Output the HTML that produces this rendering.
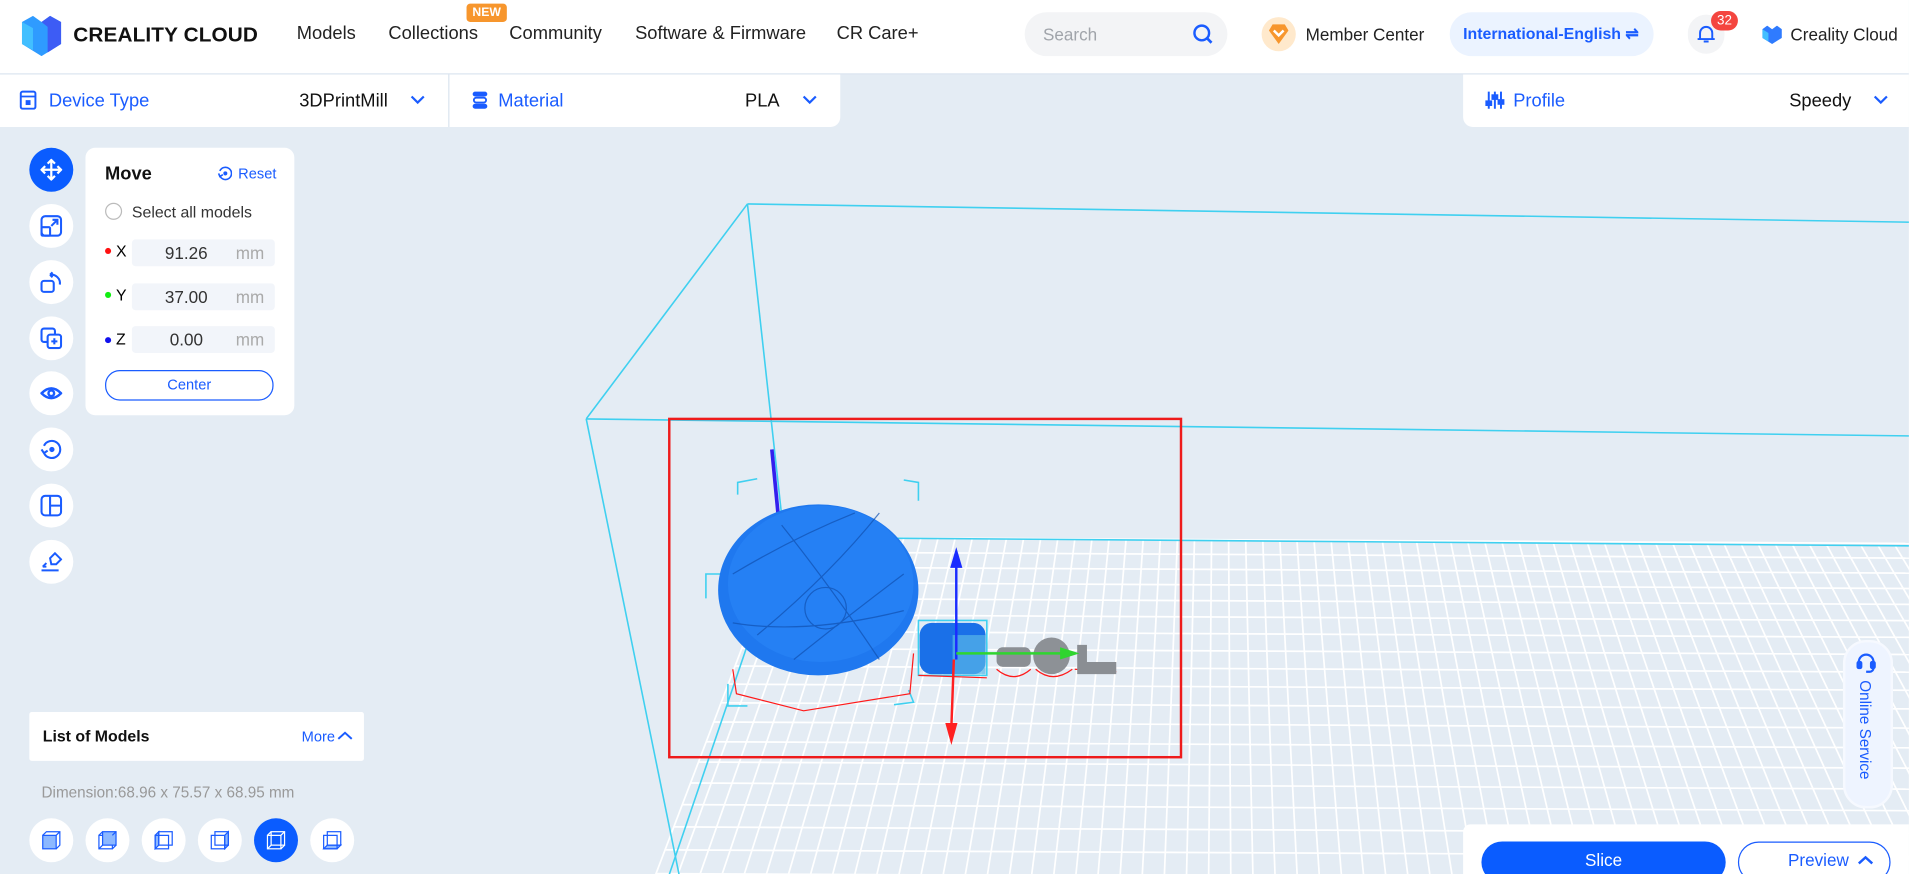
<!DOCTYPE html>
<html><head><meta charset="utf-8">
<style>
html,body{margin:0;padding:0;width:1915px;height:874px;overflow:hidden;background:#e4ecf4;font-family:"Liberation Sans",Arial,sans-serif;}
#w{position:absolute;left:0;top:0;width:1568px;height:716px;transform:scale(1.22130);transform-origin:0 0;background:#e4ecf4;overflow:hidden;}
.a{position:absolute;}
.hdr{left:0;top:0;width:1563px;height:60px;background:#fff;border-bottom:1px solid #dbe4ef;}
.nav{font-size:15px;color:#222;top:19px;}
.bar{background:#fff;top:61px;height:43px;}
.blue{color:#1a5cff;}
.tb{width:36px;height:36px;border-radius:50%;background:#fff;left:24px;}
.tb svg{position:absolute;left:9px;top:9px;}
.lbl{font-size:14px;}
.inp{left:108px;width:117px;height:22px;background:#f2f5fa;border-radius:3px;}
.inp span{position:absolute;font-size:14px;}
.cb{width:36px;height:36px;border-radius:50%;background:#fff;top:670px;}
.cb svg{position:absolute;left:10px;top:10px;}
</style></head><body><div id="w">

<svg class="a" style="left:0;top:0" width="1568" height="716" viewBox="0 0 1568 716">
<g id="grid" stroke="#fff" stroke-width="1.4"></g>
<g stroke="#3fd0f0" stroke-width="1.3" fill="none">
<line x1="612" y1="167" x2="1568" y2="182"/>
<line x1="612" y1="167" x2="480" y2="343"/>
<line x1="480" y1="343" x2="1568" y2="357"/>
<line x1="612" y1="167" x2="642" y2="440"/>
<line x1="480" y1="343" x2="556" y2="716"/>
<line x1="642" y1="440" x2="1568" y2="447"/>
<line x1="642" y1="440" x2="548" y2="716"/>
<path d="M604 405 L604 395 L620 392 M740 393 L752 395 L752 410 M584 470 L578 470 L578 490 M578 470 L598 470 M596 560 L596 578 L612 578 M744 565 L748 575 L732 577 M752 508 L808 508 L808 553 L752 553 Z"/>
</g>
<g stroke="#ff1a1a" stroke-width="1" fill="none">
<path d="M600 548 L603 568 L658 582 L745 568 L748 535"/>
<path d="M752 553 L808 555 M816 548 q14 12 28 0 M848 548 q14 12 30 0 M880 548 L914 550"/>
</g>
<line x1="632" y1="368" x2="637" y2="420" stroke="#3320ee" stroke-width="3"/>
<ellipse cx="670" cy="483" rx="82" ry="70" fill="#1f78ef"/>
<ellipse cx="672" cy="478" rx="76" ry="64" fill="#2a86f6" opacity=".6"/>
<g stroke="#1050b0" stroke-width="1" fill="none" opacity=".7">
<path d="M600 470 Q650 440 700 420 M620 520 Q680 470 720 420 M650 540 Q700 500 740 470 M640 430 Q680 480 720 540 M600 510 Q660 520 740 500"/>
<circle cx="676" cy="498" r="17"/>
</g>
<rect x="753" y="510" width="54" height="42" rx="10" fill="#1a70e8"/>
<rect x="780" y="520" width="27" height="32" fill="#58b7e8" opacity=".7"/>
<rect x="816" y="530" width="28" height="16" rx="5" fill="#8b8f94"/>
<circle cx="861" cy="537" r="15" fill="#8d9196"/>
<path d="M882 528 h8 v14 h24 v10 h-32 z" fill="#8a8e93"/>
<line x1="783" y1="462" x2="783" y2="540" stroke="#1a2cff" stroke-width="2"/>
<path d="M783 448 L778 465 L788 465 Z" fill="#1a2cff"/>
<line x1="781" y1="540" x2="779" y2="595" stroke="#ff2020" stroke-width="2"/>
<path d="M779 610 L774 592 L784 592 Z" fill="#ff2020"/>
<line x1="783" y1="535" x2="870" y2="535" stroke="#2fd52f" stroke-width="2"/>
<path d="M884 535 L868 530 L868 540 Z" fill="#2fd52f"/>
<rect x="548" y="343" width="419" height="277" fill="none" stroke="#ee1b1b" stroke-width="2"/>
</svg>

<div class="a hdr"></div>
<svg class="a" style="left:17px;top:12px" width="34" height="34" viewBox="0 0 34 34">
<path d="M1 6 L10 1 L17 6 L24 1 L33 6 L33 24 L17 34 L1 24 Z" fill="#2f9bff"/>
<path d="M17 6 L24 1 L33 6 L33 24 L22 31 L22 10 Z" fill="#3d5cf5"/>
<path d="M1 6 L10 11 L10 29 L1 24 Z" fill="#42bfff"/>
</svg>
<div class="a" style="left:60px;top:19px;font-size:17px;font-weight:bold;letter-spacing:0.1px;color:#111;">CREALITY CLOUD</div>
<div class="a nav" style="left:243px">Models</div>
<div class="a nav" style="left:318px">Collections</div>
<div class="a" style="left:382px;top:3px;width:33px;height:15px;background:#f7962d;border-radius:3px;color:#fff;font-size:10px;font-weight:bold;text-align:center;line-height:15px;">NEW</div>
<div class="a nav" style="left:417px">Community</div>
<div class="a nav" style="left:520px">Software &amp; Firmware</div>
<div class="a nav" style="left:685px">CR Care+</div>
<div class="a" style="left:839px;top:10px;width:166px;height:36px;border-radius:18px;background:#f3f4f6;"></div>
<div class="a" style="left:854px;top:20px;font-size:14px;color:#a0a4aa;">Search</div>
<svg class="a" style="left:976px;top:19px" width="18" height="18" viewBox="0 0 18 18"><circle cx="8" cy="8" r="6" fill="none" stroke="#1a5cff" stroke-width="2"/><line x1="12" y1="12" x2="16" y2="16" stroke="#1a5cff" stroke-width="2.2"/></svg>
<div class="a" style="left:1033px;top:14px;width:28px;height:28px;border-radius:50%;background:#ffe9cc;"></div>
<svg class="a" style="left:1039px;top:19px" width="16" height="18" viewBox="0 0 16 18"><path d="M3 1 H13 L16 6 L8 17 L0 6 Z" fill="#f7962d"/><path d="M4 6 L8 10 L12 6" fill="none" stroke="#fff" stroke-width="2"/></svg>
<div class="a" style="left:1069px;top:20px;font-size:14px;color:#222;">Member Center</div>
<div class="a" style="left:1187px;top:10px;width:167px;height:36px;border-radius:18px;background:#ebf3ff;"></div>
<div class="a" style="left:1198px;top:20px;font-size:13px;font-weight:bold;color:#1a5cff;">International-English ⇌</div>
<div class="a" style="left:1382px;top:12px;width:30px;height:32px;border-radius:15px;background:#f3f4f6;"></div>
<svg class="a" style="left:1389px;top:19px" width="16" height="18" viewBox="0 0 16 18"><path d="M3 13 V8 a5 5 0 0 1 10 0 V13 H15 H1 Z M6 15 h4" fill="none" stroke="#1a5cff" stroke-width="1.6"/></svg>
<div class="a" style="left:1401px;top:9px;width:22px;height:16px;border-radius:8px;background:#f4453f;color:#fff;font-size:11px;text-align:center;line-height:16px;">32</div>
<svg class="a" style="left:1443px;top:21px" width="16" height="15" viewBox="0 0 16 15"><path d="M0 3 L4 0 L8 3 L12 0 L16 3 L16 10 L8 15 L0 10 Z" fill="#2f7bff"/><path d="M0 3 L5 6 L5 13 L0 10Z" fill="#42bfff"/></svg>
<div class="a" style="left:1466px;top:20px;font-size:14px;color:#222;">Creality Cloud</div>
<div class="a" style="left:1563px;top:0;width:5px;height:716px;background:#fff;"></div>

<div class="a bar" style="left:0;width:688px;border-radius:0 0 8px 0;"></div>
<div class="a" style="left:367px;top:61px;width:1px;height:43px;background:#dbe4ef;"></div>
<svg class="a" style="left:16px;top:74px" width="14" height="16" viewBox="0 0 14 16"><rect x="1" y="1" width="12" height="14" rx="1.5" fill="none" stroke="#1a5cff" stroke-width="1.6"/><line x1="1" y1="5" x2="13" y2="5" stroke="#1a5cff" stroke-width="1.4"/><rect x="5" y="8" width="4" height="4" fill="#1a5cff"/></svg>
<div class="a lbl blue" style="left:40px;top:74px;font-size:15px;">Device Type</div>
<div class="a" style="left:245px;top:74px;font-size:15px;color:#111;">3DPrintMill</div>
<svg class="a" style="left:335px;top:77px" width="14" height="10"><path d="M2 2 L7 7 L12 2" fill="none" stroke="#1a5cff" stroke-width="1.8"/></svg>
<svg class="a" style="left:386px;top:74px" width="14" height="16" viewBox="0 0 14 16"><rect x="1" y="1" width="12" height="4" rx="2" fill="#1a5cff"/><rect x="2" y="6" width="10" height="4" rx="2" fill="none" stroke="#1a5cff" stroke-width="1.5"/><rect x="1" y="11" width="12" height="4" rx="2" fill="#1a5cff"/></svg>
<div class="a lbl blue" style="left:408px;top:74px;font-size:15px;">Material</div>
<div class="a" style="left:610px;top:74px;font-size:15px;color:#111;">PLA</div>
<svg class="a" style="left:656px;top:77px" width="14" height="10"><path d="M2 2 L7 7 L12 2" fill="none" stroke="#1a5cff" stroke-width="1.8"/></svg>
<div class="a bar" style="left:1198px;width:365px;border-radius:0 0 0 8px;"></div>
<svg class="a" style="left:1216px;top:74px" width="16" height="16" viewBox="0 0 16 16" stroke="#1a5cff" stroke-width="1.6"><line x1="3" y1="1" x2="3" y2="15"/><line x1="8" y1="1" x2="8" y2="15"/><line x1="13" y1="1" x2="13" y2="15"/><rect x="1" y="9" width="4" height="3" fill="#1a5cff"/><rect x="6" y="4" width="4" height="3" fill="#1a5cff"/><rect x="11" y="8" width="4" height="3" fill="#1a5cff"/></svg>
<div class="a lbl blue" style="left:1239px;top:74px;font-size:15px;">Profile</div>
<div class="a" style="left:1465px;top:74px;font-size:15px;color:#111;">Speedy</div>
<svg class="a" style="left:1533px;top:77px" width="14" height="10"><path d="M2 2 L7 7 L12 2" fill="none" stroke="#1a5cff" stroke-width="1.8"/></svg>

<div class="a tb" style="top:121px;background:#0a5cff;"><svg width="18" height="18" viewBox="0 0 18 18" stroke="#fff" stroke-width="1.8" fill="none"><path d="M9 1 V17 M1 9 H17 M6 4 L9 1 L12 4 M6 14 L9 17 L12 14 M4 6 L1 9 L4 12 M14 6 L17 9 L14 12"/></svg></div>
<div class="a tb" style="top:167px;"><svg width="18" height="18" viewBox="0 0 18 18" stroke="#1a5cff" stroke-width="1.7" fill="none"><rect x="1" y="1" width="16" height="16" rx="3"/><rect x="1" y="10" width="7" height="7" rx="1"/><path d="M9 9 L14 4 M10 4 H14 V8"/></svg></div>
<div class="a tb" style="top:213px;"><svg width="18" height="18" viewBox="0 0 18 18" stroke="#1a5cff" stroke-width="1.7" fill="none"><rect x="1" y="8" width="10" height="9" rx="2"/><path d="M8 3 A7 7 0 0 1 16 11 M8 3 L10 1 M8 3 L10 5"/></svg></div>
<div class="a tb" style="top:259px;"><svg width="18" height="18" viewBox="0 0 18 18" stroke="#1a5cff" stroke-width="1.7" fill="none"><rect x="1" y="1" width="11" height="11" rx="2"/><rect x="6" y="6" width="11" height="11" rx="2" fill="#fff"/><path d="M11.5 9 V14 M9 11.5 H14"/></svg></div>
<div class="a tb" style="top:304px;"><svg width="18" height="18" viewBox="0 0 18 18" stroke="#1a5cff" stroke-width="2" fill="none"><path d="M1 9 Q9 1 17 9 Q9 17 1 9 Z"/><circle cx="9" cy="9" r="2.3"/></svg></div>
<div class="a tb" style="top:350px;"><svg width="18" height="18" viewBox="0 0 18 18" stroke="#1a5cff" stroke-width="1.7" fill="none"><path d="M3 6 A7 7 0 1 1 3 12 M1 9 L3 12 L6 10"/><circle cx="9.5" cy="9" r="1.3" fill="#1a5cff"/></svg></div>
<div class="a tb" style="top:396px;"><svg width="18" height="18" viewBox="0 0 18 18" stroke="#1a5cff" stroke-width="1.7" fill="none"><rect x="1" y="1" width="16" height="16" rx="3"/><path d="M8 1 V17 M8 9 H17"/></svg></div>
<div class="a tb" style="top:442px;"><svg width="18" height="18" viewBox="0 0 18 18" stroke="#1a5cff" stroke-width="1.6" fill="none"><path d="M8 6 L12 2 L17 7 L13 11 H9 Z M1 16 H15 M2 13 L5 10 M2 13 L5 13"/></svg></div>

<div class="a" style="left:70px;top:121px;width:171px;height:219px;background:#fff;border-radius:8px;"></div>
<div class="a" style="left:64px;top:135px;width:0;height:0;border:6px solid transparent;border-right-color:#fff;"></div>
<div class="a" style="left:86px;top:134px;font-size:15px;font-weight:bold;color:#111;">Move</div>
<svg class="a" style="left:178px;top:136px" width="12" height="12" viewBox="0 0 12 12" stroke="#1a5cff" stroke-width="1.3" fill="none"><path d="M2 4 A5 5 0 1 1 2 8 M1 6 L2 8.5 L4.5 7"/><circle cx="6.5" cy="6" r="1" fill="#1a5cff"/></svg>
<div class="a blue" style="left:195px;top:135px;font-size:12px;">Reset</div>
<div class="a" style="left:86px;top:166px;width:12px;height:12px;border:1px solid #bbb;border-radius:50%;"></div>
<div class="a" style="left:108px;top:166px;font-size:13px;color:#333;">Select all models</div>
<div class="a" style="left:86px;top:203px;width:5px;height:5px;border-radius:50%;background:#f11;"></div>
<div class="a" style="left:95px;top:198px;font-size:13px;">X</div>
<div class="a inp" style="top:196px;"><span style="left:27px;top:3px;color:#333">91.26</span><span style="left:85px;top:3px;color:#aaa">mm</span></div>
<div class="a" style="left:86px;top:239px;width:5px;height:5px;border-radius:50%;background:#1e1;"></div>
<div class="a" style="left:95px;top:234px;font-size:13px;">Y</div>
<div class="a inp" style="top:232px;"><span style="left:27px;top:3px;color:#333">37.00</span><span style="left:85px;top:3px;color:#aaa">mm</span></div>
<div class="a" style="left:86px;top:276px;width:5px;height:5px;border-radius:50%;background:#11e;"></div>
<div class="a" style="left:95px;top:270px;font-size:13px;">Z</div>
<div class="a inp" style="top:267px;"><span style="left:31px;top:3px;color:#333">0.00</span><span style="left:85px;top:3px;color:#aaa">mm</span></div>
<div class="a blue" style="left:86px;top:303px;width:136px;height:23px;border:1px solid #1a5cff;border-radius:12px;text-align:center;line-height:23px;font-size:12px;">Center</div>

<div class="a" style="left:24px;top:583px;width:274px;height:40px;background:#fff;border-radius:2px;"></div>
<div class="a" style="left:35px;top:595px;font-size:13px;font-weight:bold;color:#111;">List of Models</div>
<div class="a blue" style="left:247px;top:596px;font-size:12px;">More</div>
<svg class="a" style="left:276px;top:598px" width="13" height="9"><path d="M1 7 L6.5 2 L12 7" fill="none" stroke="#1a5cff" stroke-width="1.6"/></svg>
<div class="a" style="left:34px;top:642px;font-size:12.5px;color:#999;">Dimension:68.96 x 75.57 x 68.95 mm</div>
<div class="a cb" style="left:24px"><svg width="16" height="16" viewBox="0 0 16 16" stroke="#1a5cff" stroke-width="1" fill="none"><rect x="1" y="4" width="11" height="11" fill="#8cb8ff"/><path d="M1 4 L4 1 H15 V12 L12 15 M12 4 L15 1"/></svg></div>
<div class="a cb" style="left:70px"><svg width="16" height="16" viewBox="0 0 16 16" stroke="#1a5cff" stroke-width="1" fill="none"><rect x="1" y="4" width="11" height="11"/><rect x="4" y="1" width="11" height="11" fill="#8cb8ff"/><path d="M1 4 L4 1 M12 4 L15 1 M12 15 L15 12 M1 15 L4 12"/></svg></div>
<div class="a cb" style="left:116px"><svg width="16" height="16" viewBox="0 0 16 16" stroke="#1a5cff" stroke-width="1" fill="none"><path d="M1 4 L4 1 V12 L1 15 Z" fill="#8cb8ff"/><rect x="1" y="4" width="11" height="11"/><rect x="4" y="1" width="11" height="11"/></svg></div>
<div class="a cb" style="left:162px"><svg width="16" height="16" viewBox="0 0 16 16" stroke="#1a5cff" stroke-width="1" fill="none"><path d="M12 4 L15 1 V12 L12 15 Z" fill="#8cb8ff"/><rect x="1" y="4" width="11" height="11"/><rect x="4" y="1" width="11" height="11"/></svg></div>
<div class="a cb" style="left:208px;background:#0a5cff;"><svg width="16" height="16" viewBox="0 0 16 16" stroke="#fff" stroke-width="1" fill="none"><rect x="1" y="4" width="11" height="11"/><rect x="4" y="1" width="11" height="11"/><path d="M1 4 L4 1 M12 4 L15 1 M12 15 L15 12 M1 15 L4 12"/></svg></div>
<div class="a cb" style="left:254px"><svg width="16" height="16" viewBox="0 0 16 16" stroke="#1a5cff" stroke-width="1" fill="none"><path d="M1 15 L4 12 H15 L12 15 Z" fill="#8cb8ff"/><rect x="1" y="4" width="11" height="11"/><rect x="4" y="1" width="11" height="11"/></svg></div>

<div class="a" style="left:1509px;top:524px;width:37px;height:134px;border-radius:19px;background:#eef4ff;border:2px solid #f6f9ff;"></div>
<svg class="a" style="left:1519px;top:534px" width="18" height="18" viewBox="0 0 18 18" stroke="#1a5cff" stroke-width="1.8" fill="none"><path d="M3 10 V8 a6 6 0 0 1 12 0 V10 M9 16 H12 a3 3 0 0 0 3 -3"/><rect x="2" y="8" width="3" height="5" rx="1" fill="#1a5cff"/><rect x="13" y="8" width="3" height="5" rx="1" fill="#1a5cff"/></svg>
<div class="a blue" style="left:1520px;top:557px;font-size:12.5px;writing-mode:vertical-rl;">Online Service</div>

<div class="a" style="left:1198px;top:675px;width:365px;height:50px;background:#fff;border-radius:6px 0 0 0;"></div>
<div class="a" style="left:1213px;top:689px;width:200px;height:34px;border-radius:17px;background:#0a5cff;color:#fff;text-align:center;font-size:14px;line-height:30px;">Slice</div>
<div class="a blue" style="left:1423px;top:689px;width:125px;height:34px;border:1px solid #1a5cff;border-radius:17px;box-sizing:border-box;font-size:14px;line-height:28px;"><span style="position:absolute;left:40px;">Preview</span><svg style="position:absolute;left:97px;top:10px" width="13" height="9"><path d="M1 7 L6.5 2 L12 7" fill="none" stroke="#1a5cff" stroke-width="2"/></svg></div>

</div>
<script>
(function(){
var g=document.getElementById('grid');var ns='http://www.w3.org/2000/svg';
var vx=1000,vy=-500,y0=440,yb=716;
function ln(a,b,c,d){var l=document.createElementNS(ns,'line');l.setAttribute('x1',a);l.setAttribute('y1',b);l.setAttribute('x2',c);l.setAttribute('y2',d);g.appendChild(l);}
var t=(yb-vy)/(y0-vy);
for(var i=0;i<90;i++){var xb=642+14*i; if(xb>1700)break;
 var xe=vx+(xb-vx)*t; ln(xb,y0+(xb-642)*0.008,xe,yb);}
var y=y0;while(y<yb){var d=(y-vy)/(y0-vy);var xl=vx+(642-vx)*d;ln(xl,y,1568,y+5);y+=12*d*d;}
})();
</script>
</body></html>
